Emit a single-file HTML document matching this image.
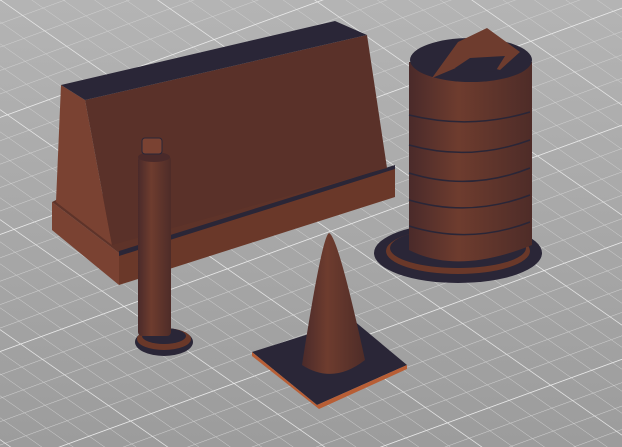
<!DOCTYPE html>
<html><head><style>html,body{margin:0;padding:0;width:622px;height:447px;overflow:hidden;background:#a8a8a8}</style></head>
<body>
<svg width="622" height="447" viewBox="0 0 622 447" xmlns="http://www.w3.org/2000/svg" style="display:block">
<defs>
<linearGradient id="bg" x1="0" y1="0" x2="0" y2="1"><stop offset="0" stop-color="#b4b4b4"/><stop offset="1" stop-color="#9c9c9c"/></linearGradient>
<pattern id="g" width="22" height="22" patternUnits="userSpaceOnUse" patternTransform="rotate(-20) skewX(35)">
<path d="M0 0H22M0 0V22" stroke="#d0d0d0" stroke-width="1" fill="none"/>
</pattern>
<pattern id="G" width="110" height="110" patternUnits="userSpaceOnUse" patternTransform="rotate(-20) skewX(35)">
<path d="M0 0H110M0 0V110" stroke="#ececec" stroke-width="1.5" fill="none"/>
</pattern>
<linearGradient id="cy" x1="0" y1="0" x2="1" y2="0"><stop offset="0" stop-color="#4a2a2a"/><stop offset=".4" stop-color="#6e3c2e"/><stop offset="1" stop-color="#4e2c28"/></linearGradient>
</defs>
<rect width="622" height="447" fill="url(#bg)"/>
<rect width="622" height="447" fill="url(#g)"/>
<rect width="622" height="447" fill="url(#G)"/>

<!-- barrier -->
<polygon points="52,202 119,253 119,285 52,230" fill="#7a4232"/>
<polygon points="119,253 395,167 395,197 119,285" fill="#6a3829"/>
<polygon points="52,202 60,198 395,167 119,253" fill="#5e3329"/>
<polygon points="119,251 395,165 395,169 119,256" fill="#2a2637"/>
<polygon points="61,85 85,100 112,245 56,202" fill="#7a4232"/>
<polygon points="85,100 367,35 387,168 112,245" fill="#5a3129"/>
<polygon points="61,85 335,21 367,35 85,100" fill="#2a2637"/>

<!-- barrel -->
<ellipse cx="458" cy="253" rx="84" ry="30" fill="#2a2637"/>
<ellipse cx="458" cy="251" rx="72" ry="23" fill="#6a3829"/>
<ellipse cx="458" cy="248" rx="68" ry="20" fill="#2a2637"/>
<path d="M409,62 L409,250 Q458,275 532,245 L532,62 Z" fill="url(#cy)"/>
<g fill="none" stroke="#2a2637" stroke-width="1.5">
<path d="M409,115 Q470,130 530,112"/>
<path d="M409,145 Q470,162 530,140"/>
<path d="M409,173 Q470,192 530,168"/>
<path d="M409,200 Q470,218 530,195"/>
<path d="M409,226 Q470,245 530,222"/>
</g>
<ellipse cx="471" cy="60" rx="61" ry="22" fill="#2a2637"/>
<polygon points="432,78 458,42 487,28 520,52 500,70 470,62" fill="#6e3c2e"/>
<polygon points="455,68 470,58 505,56 495,72" fill="#2a2637"/>

<!-- pole -->
<ellipse cx="164" cy="342" rx="29" ry="14" fill="#2a2637"/>
<ellipse cx="164" cy="339" rx="27" ry="11" fill="#6a3829"/>
<ellipse cx="164" cy="336" rx="22" ry="8" fill="#2a2637"/>
<rect x="138" y="156" width="33" height="180" rx="4" fill="url(#cy)"/>
<ellipse cx="154" cy="157" rx="16" ry="5" fill="#4a2a2a"/>
<rect x="142" y="138" width="20" height="16" rx="3" fill="#7a4232" stroke="#2a2637"/>

<!-- cone -->
<polygon points="252,352 353,320 407,365 317,405" fill="#2a2637"/>
<polygon points="252,352 317,405 407,365 407,369 319,409 252,356" fill="#b85e35"/>
<path d="M329,233 Q322,236 302,365 Q333,385 365,360 Q338,236 329,233 Z" fill="url(#cy)"/>
</svg>
</body></html>
